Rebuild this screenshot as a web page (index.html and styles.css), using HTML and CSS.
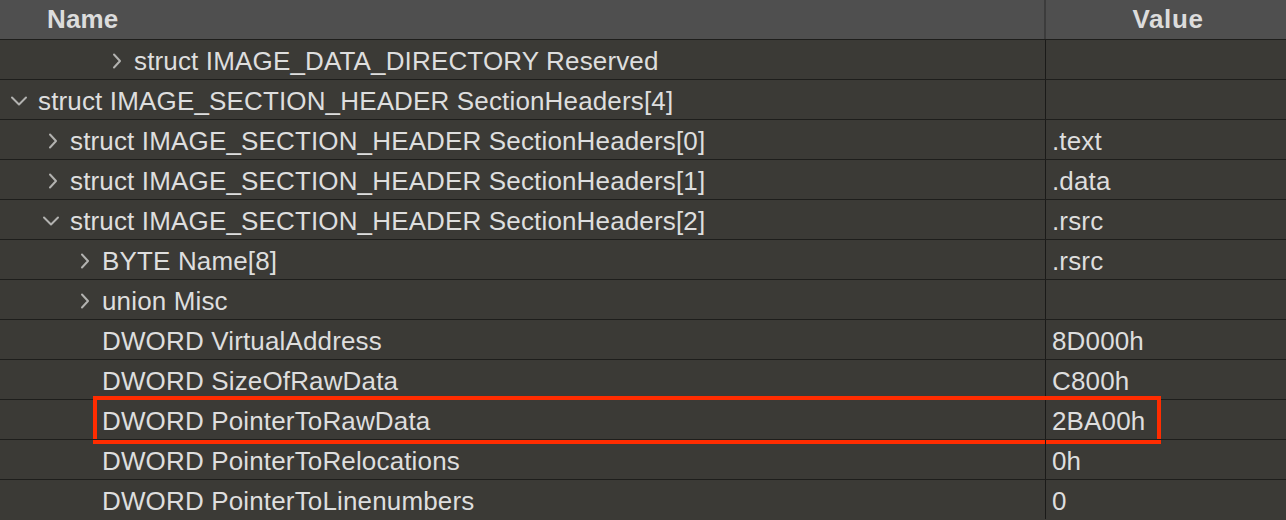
FILE: index.html
```html
<!DOCTYPE html>
<html>
<head>
<meta charset="utf-8">
<link rel="stylesheet" href="styles.css">
</head>
<body>
<div class="table">
  <div class="head">
    <div class="hname">Name</div>
    <div class="hvalue">Value</div>
  </div>
  <div class="row">
    <div class="name l3"><svg class="chev" viewBox="0 0 20 20"><path d="M8 3.5 L14 10 L8 16.5"/></svg><span class="label">struct IMAGE_DATA_DIRECTORY Reserved</span></div>
    <div class="value"></div>
  </div>
  <div class="row">
    <div class="name l0"><svg class="chev" viewBox="0 0 20 20"><path d="M2 6.5 L9 13.5 L16 6.5"/></svg><span class="label">struct IMAGE_SECTION_HEADER SectionHeaders[4]</span></div>
    <div class="value"></div>
  </div>
  <div class="row">
    <div class="name l1"><svg class="chev" viewBox="0 0 20 20"><path d="M8 3.5 L14 10 L8 16.5"/></svg><span class="label">struct IMAGE_SECTION_HEADER SectionHeaders[0]</span></div>
    <div class="value">.text</div>
  </div>
  <div class="row">
    <div class="name l1"><svg class="chev" viewBox="0 0 20 20"><path d="M8 3.5 L14 10 L8 16.5"/></svg><span class="label">struct IMAGE_SECTION_HEADER SectionHeaders[1]</span></div>
    <div class="value">.data</div>
  </div>
  <div class="row">
    <div class="name l1"><svg class="chev" viewBox="0 0 20 20"><path d="M2 6.5 L9 13.5 L16 6.5"/></svg><span class="label">struct IMAGE_SECTION_HEADER SectionHeaders[2]</span></div>
    <div class="value">.rsrc</div>
  </div>
  <div class="row">
    <div class="name l2"><svg class="chev" viewBox="0 0 20 20"><path d="M8 3.5 L14 10 L8 16.5"/></svg><span class="label">BYTE Name[8]</span></div>
    <div class="value">.rsrc</div>
  </div>
  <div class="row">
    <div class="name l2"><svg class="chev" viewBox="0 0 20 20"><path d="M8 3.5 L14 10 L8 16.5"/></svg><span class="label">union Misc</span></div>
    <div class="value"></div>
  </div>
  <div class="row">
    <div class="name l2"><span class="chev"></span><span class="label">DWORD VirtualAddress</span></div>
    <div class="value">8D000h</div>
  </div>
  <div class="row">
    <div class="name l2"><span class="chev"></span><span class="label">DWORD SizeOfRawData</span></div>
    <div class="value">C800h</div>
  </div>
  <div class="row marked">
    <div class="name l2"><span class="chev"></span><span class="label">DWORD PointerToRawData</span></div>
    <div class="value">2BA00h</div>
    <div class="highlight"></div>
  </div>
  <div class="row">
    <div class="name l2"><span class="chev"></span><span class="label">DWORD PointerToRelocations</span></div>
    <div class="value">0h</div>
  </div>
  <div class="row">
    <div class="name l2"><span class="chev"></span><span class="label">DWORD PointerToLinenumbers</span></div>
    <div class="value">0</div>
  </div>
</div>
</body>
</html>
```
FILE: styles.css
```css
html, body {
  margin: 0;
  padding: 0;
  background: #3b3a36;
  overflow: hidden;
}
.table {
  width: 1286px;
  font-family: "Liberation Sans", Arial, sans-serif;
  font-size: 26px;
  letter-spacing: 0.15px;
  color: #dedede;
}
.head {
  display: flex;
  height: 39px;
  background: #4f4f4f;
  font-weight: 700;
  color: #dcdcdc;
}
.hname {
  width: 1046px;
  box-sizing: border-box;
  padding-left: 47px;
  border-right: 2px solid #3c3c3c;
  line-height: 39px;
}
.hvalue {
  flex: 1;
  text-align: center;
  line-height: 39px;
  padding-left: 4px;
  letter-spacing: 0.6px;
}
.row {
  position: relative;
  display: flex;
  height: 40px;
  box-sizing: border-box;
  border-top: 1px solid #1e1e1c;
}
.name {
  width: 1046px;
  box-sizing: border-box;
  border-right: 1px solid #1a1a18;
  display: flex;
  align-items: center;
  white-space: nowrap;
}
.l0 { padding-left: 0; }
.l1 { padding-left: 32px; }
.l2 { padding-left: 64px; }
.l3 { padding-left: 96px; }
.chev {
  display: block;
  width: 20px;
  height: 20px;
  margin-left: 10px;
  margin-right: 8px;
  margin-top: 2px;
  flex: none;
}
svg.chev path {
  fill: none;
  stroke: #b2b2b0;
  stroke-width: 2;
  stroke-linecap: round;
  stroke-linejoin: round;
}
.label {
  line-height: 39px;
  padding-top: 3px;
}
.value {
  flex: 1;
  padding-left: 6px;
  padding-top: 2px;
  line-height: 39px;
}
.highlight {
  position: absolute;
  left: 93px;
  top: -4px;
  width: 1068px;
  height: 48px;
  box-sizing: border-box;
  border: 4px solid #ff2c00;
  pointer-events: none;
}
```
